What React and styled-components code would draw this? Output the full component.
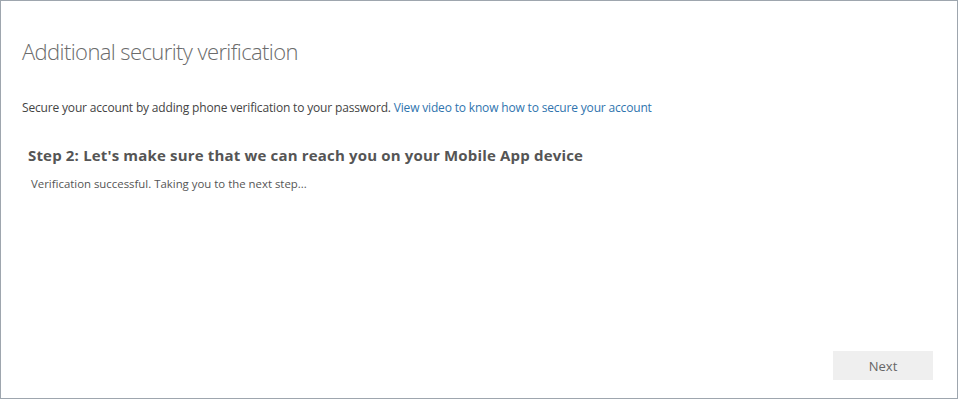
import React from "react";
import styled, { createGlobalStyle } from "styled-components";

const GlobalStyle = createGlobalStyle`
  html, body {
    margin: 0;
    padding: 0;
    background: #fff;
  }
  body {
    font-family: "Open Sans", "Noto Sans", Arial, sans-serif;
  }
`;

const Frame = styled.div`
  box-sizing: border-box;
  width: 958px;
  height: 399px;
  border: 1px solid #9ea6ae;
  display: flex;
  flex-direction: column;
  padding: 0 24px 18px 21px;
  background: #fff;
`;

const Title = styled.h1`
  margin: 34px 0 0 0;
  font-size: 22px;
  font-weight: 300;
  letter-spacing: -0.6px;
  color: #6b6b6b;
  line-height: 32px;
`;

const Intro = styled.p`
  margin: 32px 0 0 0;
  font-size: 12px;
  letter-spacing: -0.17px;
  line-height: 17px;
  color: #444;
`;

const Link = styled.a`
  color: #2f74ae;
  text-decoration: none;
`;

const Section = styled.div`
  padding-left: 6px;
  margin-top: 29px;
`;

const StepTitle = styled.h2`
  margin: 0;
  font-size: 15px;
  font-weight: 700;
  letter-spacing: 0.17px;
  color: #555;
  line-height: 20px;
`;

const Status = styled.p`
  margin: 11px 0 0 3px;
  font-size: 11.4px;
  line-height: 16px;
  color: #555;
`;

const Footer = styled.div`
  margin-top: auto;
  display: flex;
  justify-content: flex-end;
`;

const Button = styled.button`
  width: 100px;
  height: 29px;
  border: none;
  background: #efefef;
  color: #666;
  font-family: inherit;
  font-size: 13px;
  padding: 0;
`;

const App = () => {
  return (
    <>
      <GlobalStyle />
      <Frame>
        <Title>Additional security verification</Title>
        <Intro>
          Secure your account by adding phone verification to your password.{" "}
          <Link href="#">View video to know how to secure your account</Link>
        </Intro>
        <Section>
          <StepTitle>
            Step 2: Let's make sure that we can reach you on your Mobile App device
          </StepTitle>
          <Status>Verification successful. Taking you to the next step...</Status>
        </Section>
        <Footer>
          <Button>Next</Button>
        </Footer>
      </Frame>
    </>
  );
};

export default App;
